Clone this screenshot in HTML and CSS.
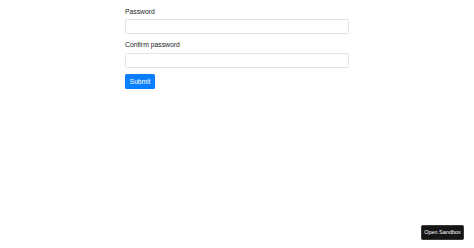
FILE: index.html
```html
<!DOCTYPE html>
<html lang="en">
<head>
<meta charset="utf-8">
<title>Form</title>
<link rel="stylesheet" href="styles.css">
</head>
<body>
<div class="container">
  <form class="form">
    <div class="group">
      <label class="label" for="pw">Password</label>
      <input class="input" id="pw" type="password">
    </div>
    <div class="group">
      <label class="label" for="pw2">Confirm password</label>
      <input class="input" id="pw2" type="password">
    </div>
    <button class="btn" type="button">Submit</button>
  </form>
</div>
<a class="sandbox" href="#">Open Sandbox</a>
</body>
</html>
```
FILE: styles.css
```css
html, body {
  margin: 0;
  padding: 0;
  background: #fff;
}
body {
  font-family: "Liberation Sans", Arial, sans-serif;
  color: #212529;
  height: 248px;
}
.container {
  width: 224px;
  margin: 0 auto;
  padding-top: 6.5px;
}
.form {
  display: flex;
  flex-direction: column;
  align-items: flex-start;
}
.group {
  display: flex;
  flex-direction: column;
  width: 100%;
  margin-bottom: 6.3px;
}
.label {
  display: block;
  font-size: 6.8px;
  line-height: 9.5px;
  margin-bottom: 3.2px;
}
.input {
  display: block;
  box-sizing: border-box;
  width: 100%;
  height: 15px;
  margin: 0;
  padding: 0 3px;
  border: 1px solid #e2e4e7;
  border-radius: 1.5px;
  background: #fff;
  font-size: 6.3px;
  outline: none;
}
.btn {
  box-sizing: border-box;
  height: 15px;
  width: 30px;
  padding: 0;
  border: none;
  border-radius: 1.5px;
  background: #0a7ffd;
  color: #fff;
  font-family: "Liberation Sans", Arial, sans-serif;
  font-size: 6.6px;
  line-height: 15px;
  text-align: center;
}
.sandbox {
  position: fixed;
  right: 10px;
  bottom: 8px;
  box-sizing: border-box;
  width: 43px;
  height: 15px;
  background: #151515;
  border: 1px solid #3a3a3a;
  border-radius: 1.5px;
  color: #fff;
  font-size: 5.5px;
  line-height: 13px;
  text-align: center;
  text-decoration: none;
}
```
